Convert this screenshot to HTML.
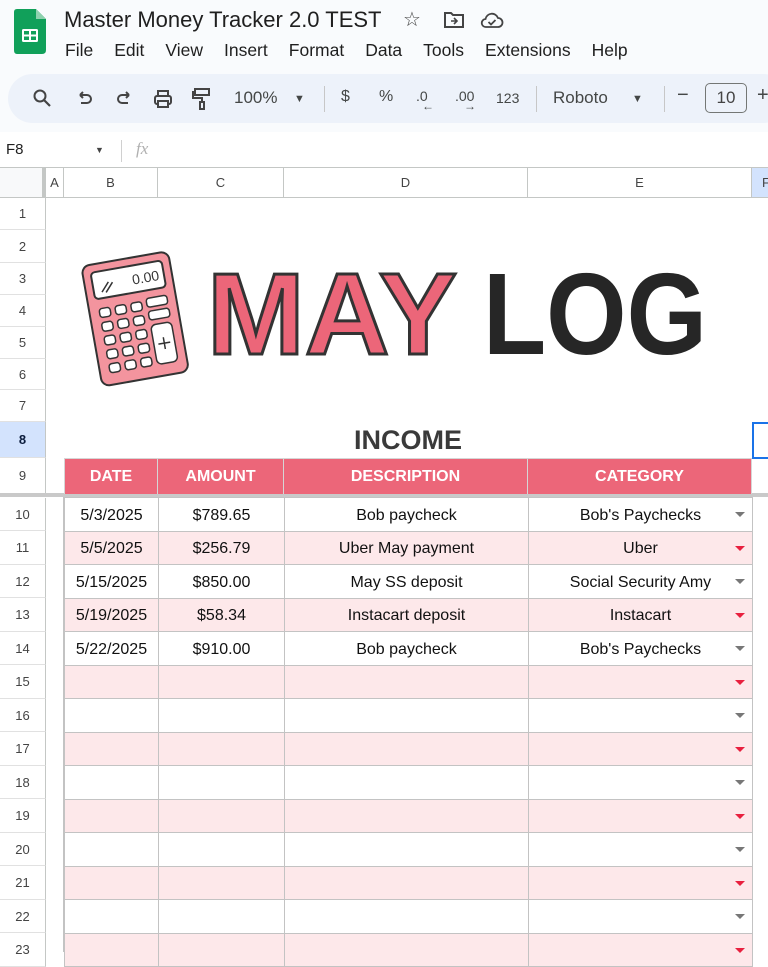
<!DOCTYPE html>
<html><head><meta charset="utf-8"><style>
*{margin:0;padding:0;box-sizing:border-box}
body{width:768px;height:952px;overflow:hidden;background:#fff;font-family:"Liberation Sans",Arial,sans-serif;position:relative;color:#1f1f1f}
.a{position:absolute}
.top{left:0;top:0;width:768px;height:132px;background:#f9fbfd}
.menu span{margin-right:21px}
.pill{left:8px;top:74px;width:780px;height:49px;background:#edf2fa;border-radius:25px}
.tb{font-size:17px;color:#444746;top:88px}
.rh{left:0;width:46px;text-align:center;font-size:13px;color:#444;border-right:1px solid #c4c7c5;border-bottom:1px solid #e1e1e1;background:#fff}
.ch{top:168px;height:30px;text-align:center;font-size:13px;color:#444;line-height:30px;border-right:1px solid #c4c7c5;border-bottom:1px solid #c4c7c5;background:#fff}
table{border-collapse:collapse;position:absolute;left:64px;top:497px;table-layout:fixed}
td{height:33.5px;border:1px solid #c3c3c3;text-align:center;font-size:16px;color:#111;position:relative;padding:3px 0 0}
tr.p td{background:#fde8ea}
.dd{position:absolute;right:7px;top:14px;width:0;height:0;border-left:5px solid transparent;border-right:5px solid transparent;border-top:5px solid #777}
tr.p .dd{border-top-color:#e8203f}
.hd{top:458px;height:36px;background:#ec6679;color:#fff;font-weight:bold;font-size:16px;text-align:center;line-height:36px;border-right:1px solid #d6d6d6;border-top:1px solid #d6d6d6}
</style></head><body>
<div class="a top"></div>
<svg class="a" style="left:14px;top:9px" width="32" height="45" viewBox="0 0 32 45"><path d="M3 0H22L32 10V41Q32 45 28 45H3Q0 45 0 41V3Q0 0 3 0Z" fill="#11a05a"/><path d="M22 0V10H32Z" fill="#8ed1ae"/><rect x="8" y="20" width="16" height="13" rx="1.5" fill="#fff"/><rect x="10" y="22" width="5" height="3.5" fill="#11a05a"/><rect x="17" y="22" width="5" height="3.5" fill="#11a05a"/><rect x="10" y="27.5" width="5" height="3.5" fill="#11a05a"/><rect x="17" y="27.5" width="5" height="3.5" fill="#11a05a"/></svg>
<div class="a" style="left:64px;top:7px;font-size:22px;color:#1f1f1f">Master Money Tracker 2.0 TEST</div>
<div class="a" style="left:403px;top:7px;font-size:20px;color:#444">☆</div>
<svg class="a" style="left:443px;top:11px" width="22" height="18" viewBox="0 0 22 18"><path d="M2 2H8L10 4H20V16H2Z" fill="none" stroke="#444" stroke-width="2"/><path d="M8 10H14M11 7L14 10L11 13" fill="none" stroke="#444" stroke-width="1.6"/></svg>
<svg class="a" style="left:480px;top:11px" width="24" height="18" viewBox="0 0 24 18"><path d="M6 16H18A4.5 4.5 0 0 0 18 7A6.5 6.5 0 0 0 5.5 8A4 4 0 0 0 6 16Z" fill="none" stroke="#444" stroke-width="1.8"/><path d="M8.5 11L11 13.5L15.5 9" fill="none" stroke="#444" stroke-width="1.8"/></svg>
<div class="a menu" style="left:65px;top:40px;font-size:17.5px;color:#1f1f1f;white-space:nowrap"><span>File</span><span>Edit</span><span>View</span><span>Insert</span><span>Format</span><span>Data</span><span>Tools</span><span>Extensions</span><span>Help</span></div>
<div class="a pill"></div>
<svg class="a" style="left:32px;top:88px" width="20" height="20" viewBox="0 0 20 20"><circle cx="8" cy="8" r="5.5" fill="none" stroke="#444" stroke-width="2"/><path d="M12 12L18 18" stroke="#444" stroke-width="2.2"/></svg>
<svg class="a" style="left:75px;top:89px" width="20" height="20" viewBox="0 0 20 20"><path d="M5 6H12A4 4 0 0 1 12 14H6M5 6L8 3M5 6L8 9" fill="none" stroke="#444" stroke-width="2"/></svg>
<svg class="a" style="left:114px;top:89px" width="20" height="20" viewBox="0 0 20 20"><path d="M15 6H8A4 4 0 0 0 8 14H14M15 6L12 3M15 6L12 9" fill="none" stroke="#444" stroke-width="2"/></svg>
<svg class="a" style="left:152px;top:88px" width="22" height="22" viewBox="0 0 22 22"><rect x="6" y="3" width="10" height="5" fill="none" stroke="#444" stroke-width="2"/><rect x="3" y="8" width="16" height="8" rx="2" fill="none" stroke="#444" stroke-width="2"/><rect x="6" y="13" width="10" height="6" fill="#edf2fa" stroke="#444" stroke-width="2"/></svg>
<svg class="a" style="left:192px;top:87px" width="20" height="24" viewBox="0 0 20 24"><rect x="3" y="2" width="14" height="6" fill="none" stroke="#444" stroke-width="2"/><path d="M3 5H1V11H10V15" fill="none" stroke="#444" stroke-width="2"/><rect x="8" y="15" width="4" height="7" fill="none" stroke="#444" stroke-width="2"/></svg>
<div class="a tb" style="left:234px">100%</div>
<div class="a tb" style="left:294px;font-size:11px;top:93px">▼</div>
<div class="a" style="left:324px;top:86px;width:1px;height:26px;background:#c7c7c7"></div>
<div class="a tb" style="left:341px;font-size:16px">$</div>
<div class="a tb" style="left:379px;font-size:16px">%</div>
<div class="a tb" style="left:416px;font-size:14px">.0<span style="position:absolute;left:6px;top:11px;font-size:12px">←</span></div>
<div class="a tb" style="left:455px;font-size:14px">.00<span style="position:absolute;left:9px;top:11px;font-size:12px">→</span></div>
<div class="a tb" style="left:496px;font-size:14px;top:90px">123</div>
<div class="a" style="left:536px;top:86px;width:1px;height:26px;background:#c7c7c7"></div>
<div class="a tb" style="left:553px">Roboto</div>
<div class="a tb" style="left:632px;font-size:11px;top:93px">▼</div>
<div class="a" style="left:664px;top:86px;width:1px;height:26px;background:#c7c7c7"></div>
<div class="a tb" style="left:677px;font-size:20px;top:84px">−</div>
<div class="a" style="left:705px;top:83px;width:42px;height:30px;border:1px solid #747775;border-radius:5px;font-size:17px;color:#444;text-align:center;line-height:28px">10</div>
<div class="a tb" style="left:757px;font-size:20px;top:84px">+</div>
<div class="a" style="left:6px;top:141px;font-size:15px">F8</div>
<div class="a" style="left:95px;top:145px;font-size:9px;color:#444">▼</div>
<div class="a" style="left:121px;top:140px;width:1px;height:22px;background:#d0d0d0"></div>
<div class="a" style="left:136px;top:139px;font-size:17px;color:#b0b0b0;font-style:italic;font-family:'Liberation Serif',serif">fx</div>
<div class="a" style="left:0;top:167px;width:768px;height:1px;background:#c4c7c5"></div>
<div class="a ch" style="left:0;width:46px;background:#f8f9fa;border-right:4px solid #c4c7c5"></div>
<div class="a ch" style="left:46px;width:18px">A</div>
<div class="a ch" style="left:64px;width:94px">B</div>
<div class="a ch" style="left:158px;width:126px">C</div>
<div class="a ch" style="left:284px;width:244px">D</div>
<div class="a ch" style="left:528px;width:224px">E</div>
<div class="a ch" style="left:752px;width:30px;background:#d3e3fd;text-align:left;padding-left:10px">F</div>
<div class="a rh" style="top:198px;height:32px;line-height:32px">1</div>
<div class="a rh" style="top:230px;height:33px;line-height:33px">2</div>
<div class="a rh" style="top:263px;height:32px;line-height:32px">3</div>
<div class="a rh" style="top:295px;height:32px;line-height:32px">4</div>
<div class="a rh" style="top:327px;height:32px;line-height:32px">5</div>
<div class="a rh" style="top:359px;height:31px;line-height:31px">6</div>
<div class="a rh" style="top:390px;height:32px;line-height:32px">7</div>
<div class="a rh" style="top:422px;height:36px;line-height:36px;background:#d3e3fd;font-weight:bold;color:#0b1c3c">8</div>
<div class="a rh" style="top:458px;height:36px;line-height:36px">9</div>
<div class="a" style="left:0;top:493px;width:768px;height:4px;background:#c9c9c9"></div>
<div class="a" style="left:46px;top:497px;width:18px;height:455px;border-right:1px solid #c3c3c3"></div>
<div class="a rh" style="top:497.5px;height:33.5px;line-height:33px">10</div>
<div class="a rh" style="top:531px;height:33.5px;line-height:33px">11</div>
<div class="a rh" style="top:564.5px;height:33.5px;line-height:33px">12</div>
<div class="a rh" style="top:598px;height:33.5px;line-height:33px">13</div>
<div class="a rh" style="top:631.5px;height:33.5px;line-height:33px">14</div>
<div class="a rh" style="top:665px;height:33.5px;line-height:33px">15</div>
<div class="a rh" style="top:698.5px;height:33.5px;line-height:33px">16</div>
<div class="a rh" style="top:732px;height:33.5px;line-height:33px">17</div>
<div class="a rh" style="top:765.5px;height:33.5px;line-height:33px">18</div>
<div class="a rh" style="top:799px;height:33.5px;line-height:33px">19</div>
<div class="a rh" style="top:832.5px;height:33.5px;line-height:33px">20</div>
<div class="a rh" style="top:866px;height:33.5px;line-height:33px">21</div>
<div class="a rh" style="top:899.5px;height:33.5px;line-height:33px">22</div>
<div class="a rh" style="top:933px;height:33.5px;line-height:33px">23</div>

<svg class="a" style="left:74px;top:248px" width="120" height="140" viewBox="0 0 120 140">
<g transform="rotate(-10 60 70)" stroke="#333" stroke-width="2">
<rect x="17" y="10" width="88" height="122" rx="8" fill="#f3949e"/>
<rect x="25" y="18" width="72" height="27" rx="4" fill="#fff"/>
<path d="M33 39L41 30M37 40L45 31" stroke-width="1.5"/>
<text x="92" y="37" text-anchor="end" font-size="14" fill="#333" stroke="none" font-family="Liberation Sans">0.00</text>
<g fill="#fff" stroke-width="1.5">
<rect x="27" y="55" width="11" height="9" rx="3"/><rect x="43" y="55" width="11" height="9" rx="3"/><rect x="59" y="55" width="11" height="9" rx="3"/>
<rect x="27" y="69" width="11" height="9" rx="3"/><rect x="43" y="69" width="11" height="9" rx="3"/><rect x="59" y="69" width="11" height="9" rx="3"/>
<rect x="27" y="83" width="11" height="9" rx="3"/><rect x="43" y="83" width="11" height="9" rx="3"/><rect x="59" y="83" width="11" height="9" rx="3"/>
<rect x="27" y="97" width="11" height="9" rx="3"/><rect x="43" y="97" width="11" height="9" rx="3"/><rect x="59" y="97" width="11" height="9" rx="3"/>
<rect x="27" y="111" width="11" height="9" rx="3"/><rect x="43" y="111" width="11" height="9" rx="3"/><rect x="59" y="111" width="11" height="9" rx="3"/>
<rect x="75" y="53" width="21" height="9" rx="3"/><rect x="75" y="66" width="21" height="9" rx="3"/>
<rect x="75" y="80" width="21" height="40" rx="5"/>
</g>
<path d="M85.5 94V106M79.5 100H91.5" stroke-width="1.5"/>
</g></svg>
<svg class="a" style="left:190px;top:250px" width="540" height="120">
<text x="17" y="104" font-family="Liberation Sans" font-weight="bold" font-size="116" fill="#ec6679" stroke="#333" stroke-width="3" textLength="250" lengthAdjust="spacingAndGlyphs">MAY</text>
<text x="293" y="104" font-family="Liberation Sans" font-weight="bold" font-size="116" fill="#262626" textLength="224" lengthAdjust="spacingAndGlyphs">LOG</text>
</svg>
<div class="a" style="left:64px;top:422px;width:688px;height:36px;text-align:center;font-size:27px;font-weight:bold;color:#3a3a3a;line-height:36px">INCOME</div>
<div class="a" style="left:752px;top:422px;width:20px;height:37px;border:2px solid #1a73e8;border-right:none"></div>
<div class="a hd" style="left:64px;width:94px;border-left:1px solid #d6d6d6">DATE</div>
<div class="a hd" style="left:158px;width:126px">AMOUNT</div>
<div class="a hd" style="left:284px;width:244px">DESCRIPTION</div>
<div class="a hd" style="left:528px;width:224px">CATEGORY</div>
<table>
<colgroup><col style="width:94px"><col style="width:126px"><col style="width:244px"><col style="width:224px"></colgroup>
<tr><td>5/3/2025</td><td>$789.65</td><td>Bob paycheck</td><td>Bob's Paychecks<i class="dd"></i></td></tr>
<tr class="p"><td>5/5/2025</td><td>$256.79</td><td>Uber May payment</td><td>Uber<i class="dd"></i></td></tr>
<tr><td>5/15/2025</td><td>$850.00</td><td>May SS deposit</td><td>Social Security Amy<i class="dd"></i></td></tr>
<tr class="p"><td>5/19/2025</td><td>$58.34</td><td>Instacart deposit</td><td>Instacart<i class="dd"></i></td></tr>
<tr><td>5/22/2025</td><td>$910.00</td><td>Bob paycheck</td><td>Bob's Paychecks<i class="dd"></i></td></tr>
<tr class="p"><td></td><td></td><td></td><td><i class="dd"></i></td></tr>
<tr><td></td><td></td><td></td><td><i class="dd"></i></td></tr>
<tr class="p"><td></td><td></td><td></td><td><i class="dd"></i></td></tr>
<tr><td></td><td></td><td></td><td><i class="dd"></i></td></tr>
<tr class="p"><td></td><td></td><td></td><td><i class="dd"></i></td></tr>
<tr><td></td><td></td><td></td><td><i class="dd"></i></td></tr>
<tr class="p"><td></td><td></td><td></td><td><i class="dd"></i></td></tr>
<tr><td></td><td></td><td></td><td><i class="dd"></i></td></tr>
<tr class="p"><td></td><td></td><td></td><td><i class="dd"></i></td></tr>
</table>
</body></html>
